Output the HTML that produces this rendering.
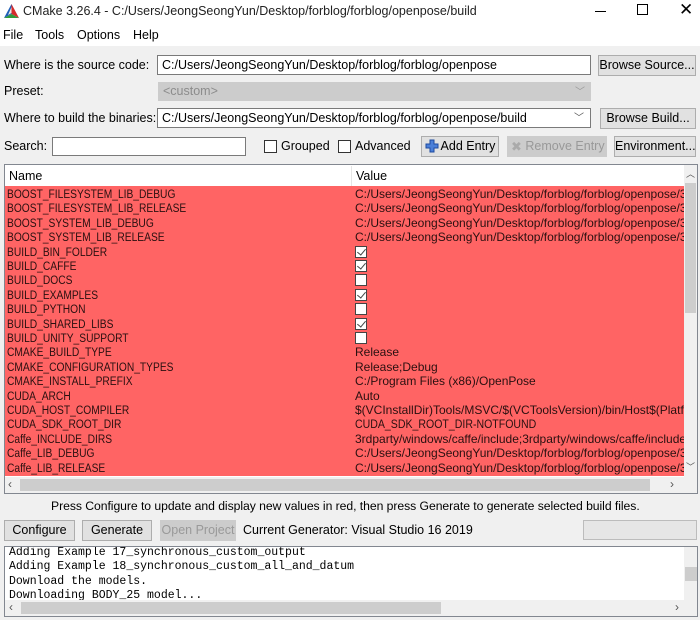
<!DOCTYPE html>
<html><head><meta charset="utf-8"><style>
*{box-sizing:border-box;margin:0;padding:0}
body{width:700px;height:620px;background:#f0f0f0;font-family:"Liberation Sans","Noto Sans CJK KR",sans-serif;font-size:12px;color:#000;position:relative;overflow:hidden}
.a{position:absolute;white-space:nowrap}
.inp{position:absolute;background:#fff;border:1px solid #7a7a7a;padding:2px 4px;font-size:12.5px;line-height:15px}
.btn{position:absolute;background:#e1e1e1;border:1px solid #adadad;text-align:center;font-size:12.5px;line-height:19px}
.cb{position:absolute;width:13px;height:13px;border:1px solid #333;background:#fff}
.row{position:absolute;left:7px;height:14.4px;line-height:14.4px;font-size:12.2px;color:#2a1010;white-space:nowrap;transform:scaleX(0.84);transform-origin:0 0}
.v{position:absolute;left:355px;white-space:nowrap;font-size:12px;color:#2a1010;line-height:14.4px}
.vc{position:absolute;left:355px;width:12px;height:12px;border:1px solid #444;background:#fff}
.vc.c::after{content:"";position:absolute;left:3px;top:0px;width:4px;height:7px;border:solid #444;border-width:0 1.5px 1.5px 0;transform:rotate(40deg)}
.mono{font-family:"Liberation Mono",monospace;font-size:11.5px;position:absolute;left:9px;white-space:nowrap;line-height:14.4px}
</style></head><body>
<div class="a" style="left:0;top:0;width:700px;height:46px;background:#fff"></div>
<svg class="a" style="left:4px;top:4px" width="15" height="15" viewBox="0 0 15 15"><polygon points="7.5,0 0,14 7.5,10" fill="#1f5fb8"/><polygon points="7.5,0 15,14 7.5,10" fill="#d42b2b"/><polygon points="0,14 15,14 7.5,10" fill="#2f9a3a"/><polygon points="7.5,3 4,11 7.5,9" fill="#e8e8e8"/></svg>
<div class="a" style="left:23px;top:4px;font-size:12.5px;color:#222">CMake 3.26.4 - C:/Users/JeongSeongYun/Desktop/forblog/forblog/openpose/build</div>
<div class="a" style="left:595px;top:11px;width:11px;height:1px;background:#000"></div>
<div class="a" style="left:637px;top:4px;width:11px;height:11px;border:1px solid #000"></div>
<div class="a" style="left:679px;top:0px;font-size:17px">✕</div>
<div class="a" style="left:3px;top:28px;font-size:12.5px">File</div>
<div class="a" style="left:35px;top:28px;font-size:12.5px">Tools</div>
<div class="a" style="left:77px;top:28px;font-size:12.5px">Options</div>
<div class="a" style="left:133px;top:28px;font-size:12.5px">Help</div>

<div class="a" style="left:4px;top:58px;font-size:12.5px">Where is the source code:</div>
<div class="inp" style="left:157px;top:55px;width:434px;height:20px">C:/Users/JeongSeongYun/Desktop/forblog/forblog/openpose</div>
<div class="btn" style="left:598px;top:55px;width:98px;height:21px">Browse Source...</div>
<div class="a" style="left:4px;top:84px;font-size:12.5px">Preset:</div>
<div class="a" style="left:158px;top:82px;width:433px;height:19px;background:#ccc;color:#8c8c8c;padding:2px 5px;font-size:12.5px">&lt;custom&gt;<span style="position:absolute;right:6px;top:1px;font-size:10px;color:#999">﹀</span></div>
<div class="a" style="left:4px;top:111px;font-size:12.5px">Where to build the binaries:</div>
<div class="inp" style="left:157px;top:108px;width:434px;height:20px">C:/Users/JeongSeongYun/Desktop/forblog/forblog/openpose/build<span style="position:absolute;right:6px;top:2px;font-size:10px;color:#555">﹀</span></div>
<div class="btn" style="left:600px;top:108px;width:96px;height:21px">Browse Build...</div>

<div class="a" style="left:4px;top:139px;font-size:12.5px">Search:</div>
<div class="inp" style="left:52px;top:137px;width:194px;height:19px"></div>
<div class="cb" style="left:264px;top:140px"></div>
<div class="a" style="left:281px;top:139px;font-size:12.5px">Grouped</div>
<div class="cb" style="left:338px;top:140px"></div>
<div class="a" style="left:355px;top:139px;font-size:12.5px">Advanced</div>
<div class="btn" style="left:421px;top:136px;width:78px;height:21px;padding-left:16px">Add Entry</div>
<svg class="a" style="left:425px;top:139px" width="14" height="14" viewBox="0 0 14 14"><path d="M5 1h4v4h4v4h-4v4h-4v-4h-4v-4h4z" fill="#4a7fd8" stroke="#1d4aa0"/></svg>
<div class="btn" style="left:507px;top:136px;width:100px;height:21px;background:#ccc;border-color:#ccc;color:#999;padding-left:16px">Remove Entry</div>
<div class="a" style="left:511px;top:139px;color:#aaa;font-size:13px">✖</div>
<div class="btn" style="left:614px;top:136px;width:82px;height:21px">Environment...</div>

<div class="a" style="left:4px;top:164px;width:694px;height:330px;border:1px solid #828790;background:#fff"></div>
<div class="a" style="left:9px;top:169px;font-size:12.5px">Name</div>
<div class="a" style="left:351px;top:166px;width:1px;height:20px;background:#e5e5e5"></div>
<div class="a" style="left:356px;top:169px;font-size:12.5px">Value</div>
<div class="a" style="left:5px;top:186px;width:679px;height:290px;background:#ff6464"></div>
<div class="a" style="left:684px;top:165px;width:13px;height:312px;background:#f0f0f0"></div>
<div class="a" style="left:685px;top:183px;width:11px;height:130px;background:#cdcdcd"></div>
<div class="a" style="left:686px;top:167px;font-size:9px;color:#555">︿</div>
<div class="a" style="left:686px;top:460px;font-size:9px;color:#555">﹀</div>
<div class="a" style="left:5px;top:477px;width:692px;height:16px;background:#f0f0f0"></div>
<div class="a" style="left:20px;top:479px;width:630px;height:12px;background:#cdcdcd"></div>
<div class="a" style="left:8px;top:477px;font-size:12px;color:#555">‹</div>
<div class="a" style="left:670px;top:477px;font-size:12px;color:#555">›</div>

<div class="row" style="top:187px">BOOST_FILESYSTEM_LIB_DEBUG</div>
<div class="row" style="top:201.4px">BOOST_FILESYSTEM_LIB_RELEASE</div>
<div class="row" style="top:215.8px">BOOST_SYSTEM_LIB_DEBUG</div>
<div class="row" style="top:230.2px">BOOST_SYSTEM_LIB_RELEASE</div>
<div class="row" style="top:244.6px">BUILD_BIN_FOLDER</div>
<div class="row" style="top:259px">BUILD_CAFFE</div>
<div class="row" style="top:273.4px">BUILD_DOCS</div>
<div class="row" style="top:287.8px">BUILD_EXAMPLES</div>
<div class="row" style="top:302.2px">BUILD_PYTHON</div>
<div class="row" style="top:316.6px">BUILD_SHARED_LIBS</div>
<div class="row" style="top:331px">BUILD_UNITY_SUPPORT</div>
<div class="row" style="top:345.4px">CMAKE_BUILD_TYPE</div>
<div class="row" style="top:359.8px">CMAKE_CONFIGURATION_TYPES</div>
<div class="row" style="top:374.2px">CMAKE_INSTALL_PREFIX</div>
<div class="row" style="top:388.6px">CUDA_ARCH</div>
<div class="row" style="top:403px">CUDA_HOST_COMPILER</div>
<div class="row" style="top:417.4px">CUDA_SDK_ROOT_DIR</div>
<div class="row" style="top:431.8px">Caffe_INCLUDE_DIRS</div>
<div class="row" style="top:446.2px">Caffe_LIB_DEBUG</div>
<div class="row" style="top:460.6px">Caffe_LIB_RELEASE</div>

<div class="a" style="left:355px;top:187px;width:329px;height:290px;overflow:hidden">
<div class="v" style="left:0;top:0">C:/Users/JeongSeongYun/Desktop/forblog/forblog/openpose/3rdparty</div>
<div class="v" style="left:0;top:14.4px">C:/Users/JeongSeongYun/Desktop/forblog/forblog/openpose/3rdparty</div>
<div class="v" style="left:0;top:28.8px">C:/Users/JeongSeongYun/Desktop/forblog/forblog/openpose/3rdparty</div>
<div class="v" style="left:0;top:43.2px">C:/Users/JeongSeongYun/Desktop/forblog/forblog/openpose/3rdparty</div>
<div class="vc c" style="left:0;top:58.5px"></div>
<div class="vc c" style="left:0;top:72.9px"></div>
<div class="vc" style="left:0;top:87.3px"></div>
<div class="vc c" style="left:0;top:101.7px"></div>
<div class="vc" style="left:0;top:116.1px"></div>
<div class="vc c" style="left:0;top:130.5px"></div>
<div class="vc" style="left:0;top:144.9px"></div>
<div class="v" style="left:0;top:158.4px">Release</div>
<div class="v" style="left:0;top:172.8px">Release;Debug</div>
<div class="v" style="left:0;top:187.2px">C:/Program Files (x86)/OpenPose</div>
<div class="v" style="left:0;top:201.6px">Auto</div>
<div class="v" style="left:0;top:216px">$(VCInstallDir)Tools/MSVC/$(VCToolsVersion)/bin/Host$(Platform)</div>
<div class="v" style="left:0;top:230.4px;transform:scaleX(0.88);transform-origin:0 0">CUDA_SDK_ROOT_DIR-NOTFOUND</div>
<div class="v" style="left:0;top:244.8px">3rdparty/windows/caffe/include;3rdparty/windows/caffe/include2</div>
<div class="v" style="left:0;top:259.2px">C:/Users/JeongSeongYun/Desktop/forblog/forblog/openpose/3rdparty</div>
<div class="v" style="left:0;top:273.6px">C:/Users/JeongSeongYun/Desktop/forblog/forblog/openpose/3rdparty</div>
</div>

<div class="a" style="left:51px;top:499px;font-size:12.2px;letter-spacing:-0.05px">Press Configure to update and display new values in red, then press Generate to generate selected build files.</div>
<div class="btn" style="left:4px;top:520px;width:71px;height:21px">Configure</div>
<div class="btn" style="left:82px;top:520px;width:70px;height:21px">Generate</div>
<div class="btn" style="left:160px;top:520px;width:76px;height:21px;background:#ccc;border-color:#ccc;color:#999">Open Project</div>
<div class="a" style="left:243px;top:523px;font-size:12.5px">Current Generator: Visual Studio 16 2019</div>
<div class="a" style="left:583px;top:520px;width:114px;height:20px;border:1px solid #bcbcbc;background:#e6e6e6"></div>

<div class="a" style="left:4px;top:546px;width:694px;height:71px;border:1px solid #828790;background:#fff;overflow:hidden">
<div class="mono" style="left:4px;top:-1px">Adding Example 17_synchronous_custom_output</div>
<div class="mono" style="left:4px;top:13.4px">Adding Example 18_synchronous_custom_all_and_datum</div>
<div class="mono" style="left:4px;top:27.8px">Download the models.</div>
<div class="mono" style="left:4px;top:42.2px">Downloading BODY_25 model...</div>
<div class="a" style="left:679px;top:0;width:14px;height:53px;background:#f0f0f0"></div>
<div class="a" style="left:680px;top:20px;width:12px;height:14px;background:#cdcdcd"></div>
<div class="a" style="left:0;top:53px;width:693px;height:16px;background:#f0f0f0"></div>
<div class="a" style="left:16px;top:55px;width:420px;height:12px;background:#cdcdcd"></div>
<div class="a" style="left:4px;top:53px;font-size:12px;color:#555">‹</div>
<div class="a" style="left:670px;top:53px;font-size:12px;color:#555">›</div>
</div>
</body></html>
